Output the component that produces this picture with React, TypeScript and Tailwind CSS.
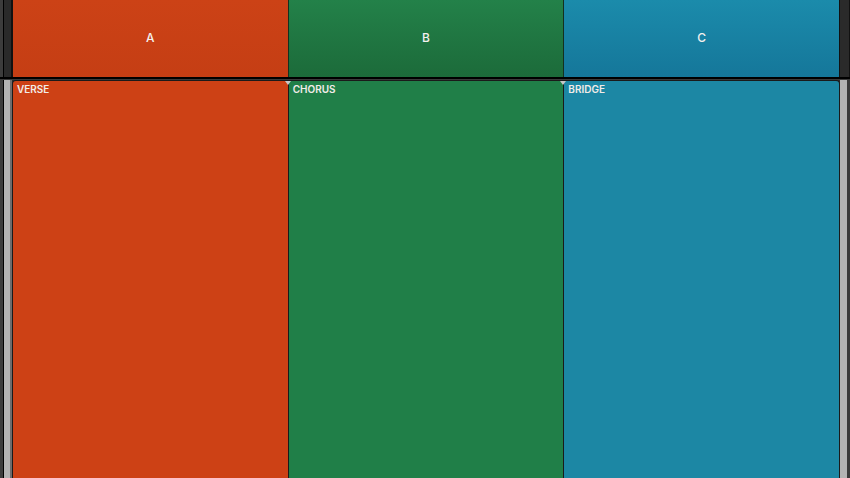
const sections = [
  { top: 'A', label: 'VERSE', bg: 'bg-[#cd4115]', grad: 'bg-gradient-to-b from-[#cc4216] to-[#c53e14]' },
  { top: 'B', label: 'CHORUS', bg: 'bg-[#207f48]', grad: 'bg-gradient-to-b from-[#238149] to-[#1c6b3a]' },
  { top: 'C', label: 'BRIDGE', bg: 'bg-[#1c87a4]', grad: 'bg-gradient-to-b from-[#1b8bab] to-[#15779a]' },
];

const App = () => {
  return (
    <div className="h-screen w-full overflow-hidden flex flex-col bg-[#2b2b2b] font-['Inter','Liberation_Sans',sans-serif]">
      {/* top pads */}
      <div className="h-[77px] flex shrink-0">
        <div className="w-[3px] bg-[#3c3c3c]" />
        <div className="w-px bg-black" />
        <div className="w-[7px] bg-[#2a2a2a]" />
        <div className="w-[2px] bg-[#111]" />
        <div className="flex-1 flex">
          {sections.map((s, i) => (
            <div
              key={s.top}
              className={`flex-1 flex items-center justify-center pb-[2px] ${s.grad} ${i > 0 ? 'border-l border-[#14301f]' : ''}`}
            >
              <span className="text-[#f4f0ee] text-[12px] font-medium">{s.top}</span>
            </div>
          ))}
        </div>
        <div className="w-px bg-[#111]" />
        <div className="w-[9px] bg-[#2a2a2a]" />
        <div className="w-px bg-[#111]" />
      </div>

      {/* divider */}
      <div className="h-[3px] shrink-0 bg-black border-b border-[#3a3a3a]" />

      {/* sections */}
      <div className="flex-1 flex">
        <div className="w-[3px] bg-[#3c3c3c]" />
        <div className="w-px bg-black" />
        <div className="w-[6px] bg-[#b3b3b3]" />
        <div className="w-[2px] bg-[#6d6d6d]" />
        <div className="flex-1 flex rounded-t-[4px] overflow-hidden border border-b-0 border-[#1a1a1a]">
          {sections.map((s, i) => (
            <div
              key={s.label}
              className={`relative flex-1 ${s.bg} ${i > 0 ? 'border-l border-[#1a1a1a]' : ''}`}
            >
              {i > 0 && (
                <div className="absolute -left-[4px] top-0 w-0 h-0 border-l-[3px] border-r-[3px] border-t-[4px] border-l-transparent border-r-transparent border-t-[#c8c8c8]" />
              )}
              <span className="absolute left-[4px] top-[3px] text-[#f2ece8] text-[10px] font-semibold leading-none">
                {s.label}
              </span>
            </div>
          ))}
        </div>
        <div className="w-[7px] bg-[#b3b3b3]" />
        <div className="w-[3px] bg-[#3a3a3a]" />
      </div>
    </div>
  );
};

export default App;
